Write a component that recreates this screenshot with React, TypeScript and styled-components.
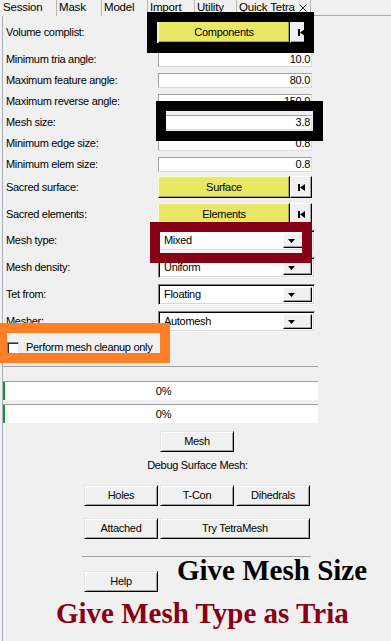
import React from "react";
import styled, { createGlobalStyle } from "styled-components";

const GlobalStyle = createGlobalStyle`
  html, body { margin: 0; padding: 0; background: #f0f0f0; }
  body { width: 391px; height: 641px; overflow: hidden; }
  #root { width: 391px; height: 641px; }
`;

const Page = styled.div`
  position: relative;
  width: 391px;
  height: 641px;
  background: #f0f0f0;
  overflow: hidden;
  font-family: "Liberation Sans", Arial, sans-serif;
  font-size: 11px;
  line-height: 13px;
  letter-spacing: -0.3px;
  color: #000;
  display: flex;
  flex-direction: column;
`;

const TabBar = styled.div`
  display: flex;
  height: 16px;
  flex-shrink: 0;
`;

const Tab = styled.div<{ $w: number; $pad?: number }>`
  width: ${(p) => p.$w}px;
  box-sizing: border-box;
  height: 16px;
  padding-left: ${(p) => p.$pad ?? 2}px;
  border-right: 1px solid #bdb7aa;
  font-size: 11.5px;
  line-height: 15px;
  letter-spacing: -0.2px;
  display: flex;
  align-items: flex-start;
  gap: 4px;
  white-space: nowrap;
  overflow: hidden;
`;

const CloseIcon = styled.svg`
  margin-top: 4px;
  flex-shrink: 0;
`;

const TabFiller = styled.div`
  flex: 1;
  border-bottom: 1px solid #a3aab6;
`;

const Panel = styled.div`
  flex: 1;
  margin-left: 2px;
  border-left: 1px solid #a9b0bc;
  display: flex;
  flex-direction: column;
`;

const Row = styled.div<{ $mt: number }>`
  display: flex;
  align-items: center;
  margin-top: ${(p) => p.$mt}px;
  padding-left: 3px;
`;

const Label = styled.span`
  width: 152px;
  flex-shrink: 0;
  white-space: nowrap;
`;

const Field = styled.div`
  width: 154px;
  height: 15px;
  box-sizing: border-box;
  background: #fff;
  border-top: 1px solid #a0a0a0;
  border-left: 1px solid #a0a0a0;
  border-right: 1px solid #dcdcdc;
  border-bottom: 1px solid #dcdcdc;
  text-align: right;
  padding-right: 1px;
  line-height: 13px;
`;

const PickGroup = styled.div`
  display: flex;
`;

const PickButton = styled.div`
  width: 132px;
  height: 22px;
  box-sizing: border-box;
  background: #e8e866;
  border-top: 1px solid #fbfbd0;
  border-left: 1px solid #fbfbd0;
  border-right: 1px solid #000;
  border-bottom: 1px solid #000;
  box-shadow: inset -1px -1px 0 #a8a850;
  display: flex;
  align-items: center;
  justify-content: center;
`;

const ResetButton = styled.div`
  width: 22px;
  height: 22px;
  box-sizing: border-box;
  background: #f0f0f0;
  border-top: 1px solid #fff;
  border-left: 1px solid #fff;
  border-right: 1px solid #000;
  border-bottom: 1px solid #000;
  box-shadow: inset -1px -1px 0 #a0a0a0;
  display: flex;
  align-items: center;
  justify-content: center;
`;

const Select = styled.div`
  width: 157px;
  height: 21px;
  box-sizing: border-box;
  background: #fff;
  border-top: 1px solid #808080;
  border-left: 1px solid #808080;
  border-right: 1px solid #f8f8f8;
  border-bottom: 1px solid #f8f8f8;
  box-shadow: inset 1px 1px 0 #000, inset -1px -1px 0 #d8d8d8;
  display: flex;
  align-items: stretch;
  padding: 2px;
`;

const SelectText = styled.span`
  flex: 1;
  padding-left: 3px;
  display: flex;
  align-items: center;
`;

const ArrowButton = styled.div`
  width: 29px;
  box-sizing: border-box;
  background: #f0f0f0;
  border-top: 1px solid #fff;
  border-left: 1px solid #fff;
  border-right: 1px solid #000;
  border-bottom: 1px solid #000;
  box-shadow: inset -1px -1px 0 #a0a0a0;
  display: flex;
  align-items: center;
  padding-left: 4px;
`;

const CheckRow = styled.div<{ $mt: number }>`
  display: flex;
  align-items: center;
  gap: 7px;
  margin-top: ${(p) => p.$mt}px;
  padding-left: 4px;
`;

const CheckBox = styled.span`
  width: 12px;
  height: 12px;
  box-sizing: border-box;
  background: #fff;
  border-top: 1px solid #808080;
  border-left: 1px solid #808080;
  border-right: 1px solid #e8e8e8;
  border-bottom: 1px solid #e8e8e8;
  box-shadow: inset 1px 1px 0 #303030;
`;

const Separator = styled.div<{ $mt: number; $w: number; $ml?: number }>`
  margin-top: ${(p) => p.$mt}px;
  margin-left: ${(p) => p.$ml ?? 0}px;
  width: ${(p) => p.$w}px;
  height: 1px;
  background: #a0a0a0;
`;

const Progress = styled.div<{ $mt: number }>`
  position: relative;
  margin-top: ${(p) => p.$mt}px;
  width: 315px;
  height: 19px;
  box-sizing: border-box;
  border-top: 1px solid #a0a0a0;
  background: #fff;
  display: flex;
  align-items: center;
  justify-content: center;
  padding-left: 6px;
`;

const ProgressFill = styled.div`
  position: absolute;
  left: 0;
  top: 0;
  bottom: 0;
  background: #129a22;
`;

const Lower = styled.div`
  margin-top: 8px;
  margin-left: 81px;
  width: 227px;
  display: flex;
  flex-direction: column;
`;

const ButtonGrid = styled.div<{ $mt: number }>`
  display: grid;
  grid-template-columns: 74px 74px 74px;
  column-gap: 2px;
  row-gap: 12px;
  margin-top: ${(p) => p.$mt}px;
`;

const Btn = styled.div<{ $col?: string }>`
  grid-column: ${(p) => p.$col ?? "auto"};
  height: 21px;
  box-sizing: border-box;
  background: #f0f0f0;
  border-top: 1px solid #e6e6e6;
  border-left: 1px solid #e6e6e6;
  border-right: 1px solid #000;
  border-bottom: 1px solid #000;
  box-shadow: inset 1px 1px 0 #fff, inset -1px -1px 0 #a0a0a0;
  display: flex;
  align-items: center;
  justify-content: center;
`;

const Caption = styled.div`
  margin-top: 7px;
  text-align: center;
`;

const AnnoBox = styled.div<{ $x: number; $y: number; $w: number; $h: number; $c: string }>`
  position: absolute;
  left: ${(p) => p.$x}px;
  top: ${(p) => p.$y}px;
  width: ${(p) => p.$w}px;
  height: ${(p) => p.$h}px;
  box-sizing: border-box;
  border: 10px solid ${(p) => p.$c};
  pointer-events: none;
`;

const Note = styled.div<{ $x: number; $y: number; $c: string }>`
  position: absolute;
  left: ${(p) => p.$x}px;
  top: ${(p) => p.$y}px;
  color: ${(p) => p.$c};
  font-family: "Liberation Serif", "Times New Roman", serif;
  font-weight: bold;
  font-size: 29px;
  line-height: 29px;
  letter-spacing: 0;
  white-space: nowrap;
`;

const FirstIcon = () => (
  <svg width="7" height="7" viewBox="0 0 7 7">
    <rect x="0" y="0" width="2" height="7" fill="#000" />
    <polygon points="7,0 2,3.5 7,7" fill="#000" />
  </svg>
);

const DownArrow = () => (
  <svg width="7" height="4" viewBox="0 0 7 4">
    <polygon points="0,0 7,0 3.5,4" fill="#000" />
  </svg>
);

const fields: [string, string][] = [
  ["Minimum tria angle:", "10.0"],
  ["Maximum feature angle:", "80.0"],
  ["Maximum reverse angle:", "150.0"],
  ["Mesh size:", "3.8"],
  ["Minimum edge size:", "0.8"],
  ["Minimum elem size:", "0.8"],
];

const picks: [string, string, number][] = [
  ["Sacred surface:", "Surface", 4],
  ["Sacred elements:", "Elements", 5],
];

const selects: [string, string, number][] = [
  ["Mesh type:", "Mixed", 5],
  ["Mesh density:", "Uniform", 6],
  ["Tet from:", "Floating", 6],
  ["Mesher:", "Automesh", 6],
];

const tabs: [string, number, number][] = [
  ["Session", 57, 3],
  ["Mask", 45, 2],
  ["Model", 46, 2],
  ["Import", 47, 2],
  ["Utility", 42, 2],
];

export default function App() {
  return (
    <>
      <GlobalStyle />
      <Page>
        <TabBar>
          {tabs.map(([t, w, pad]) => (
            <Tab key={t} $w={w} $pad={pad}>
              {t}
            </Tab>
          ))}
          <Tab $w={74} $pad={2}>
            Quick Tetra
            <CloseIcon width="8" height="8" viewBox="0 0 8 8">
              <path d="M0.5 0.5 L7.5 7.5 M7.5 0.5 L0.5 7.5" stroke="#333" strokeWidth="1" />
            </CloseIcon>
          </Tab>
          <TabFiller />
        </TabBar>
        <Panel>
          <Row $mt={5}>
            <Label>Volume complist:</Label>
            <PickGroup>
              <PickButton>Components</PickButton>
              <ResetButton>
                <FirstIcon />
              </ResetButton>
            </PickGroup>
          </Row>
          {fields.map(([l, v], i) => (
            <Row key={l} $mt={i === 0 ? 9 : 6}>
              <Label>{l}</Label>
              <Field>{v}</Field>
            </Row>
          ))}
          {picks.map(([l, b, mt]) => (
            <Row key={l} $mt={mt}>
              <Label>{l}</Label>
              <PickGroup>
                <PickButton>{b}</PickButton>
                <ResetButton>
                  <FirstIcon />
                </ResetButton>
              </PickGroup>
            </Row>
          ))}
          {selects.map(([l, v, mt]) => (
            <Row key={l} $mt={mt}>
              <Label>{l}</Label>
              <Select>
                <SelectText>{v}</SelectText>
                <ArrowButton>
                  <DownArrow />
                </ArrowButton>
              </Select>
            </Row>
          ))}
          <CheckRow $mt={9}>
            <CheckBox />
            <span>Perform mesh cleanup only</span>
          </CheckRow>
          <Separator $mt={12} $w={315} />
          <Progress $mt={14}>
            <ProgressFill style={{ width: "2px" }} />
            0%
          </Progress>
          <Progress $mt={4}>
            <ProgressFill style={{ width: "2px" }} />
            0%
          </Progress>
          <Lower>
            <ButtonGrid $mt={0}>
              <Btn $col="2">Mesh</Btn>
            </ButtonGrid>
            <Caption>Debug Surface Mesh:</Caption>
            <ButtonGrid $mt={13}>
              <Btn>Holes</Btn>
              <Btn>T-Con</Btn>
              <Btn>Dihedrals</Btn>
              <Btn>Attached</Btn>
              <Btn $col="2 / 4">Try TetraMesh</Btn>
            </ButtonGrid>
            <Separator $mt={17} $w={229} $ml={-2} />
            <ButtonGrid $mt={14}>
              <Btn>Help</Btn>
            </ButtonGrid>
          </Lower>
        </Panel>

        <AnnoBox $x={147} $y={12} $w={167} $h={41} $c="#000" />
        <AnnoBox $x={156} $y={101} $w={167} $h={40} $c="#000" />
        <AnnoBox $x={150} $y={222} $w={162} $h={41} $c="#880015" />
        <AnnoBox $x={-3} $y={323} $w={173} $h={40} $c="#ff7f27" />
        <Note $x={177} $y={556} $c="#000">Give Mesh Size</Note>
        <Note $x={56} $y={599} $c="#880015">Give Mesh Type as Tria</Note>
      </Page>
    </>
  );
}
